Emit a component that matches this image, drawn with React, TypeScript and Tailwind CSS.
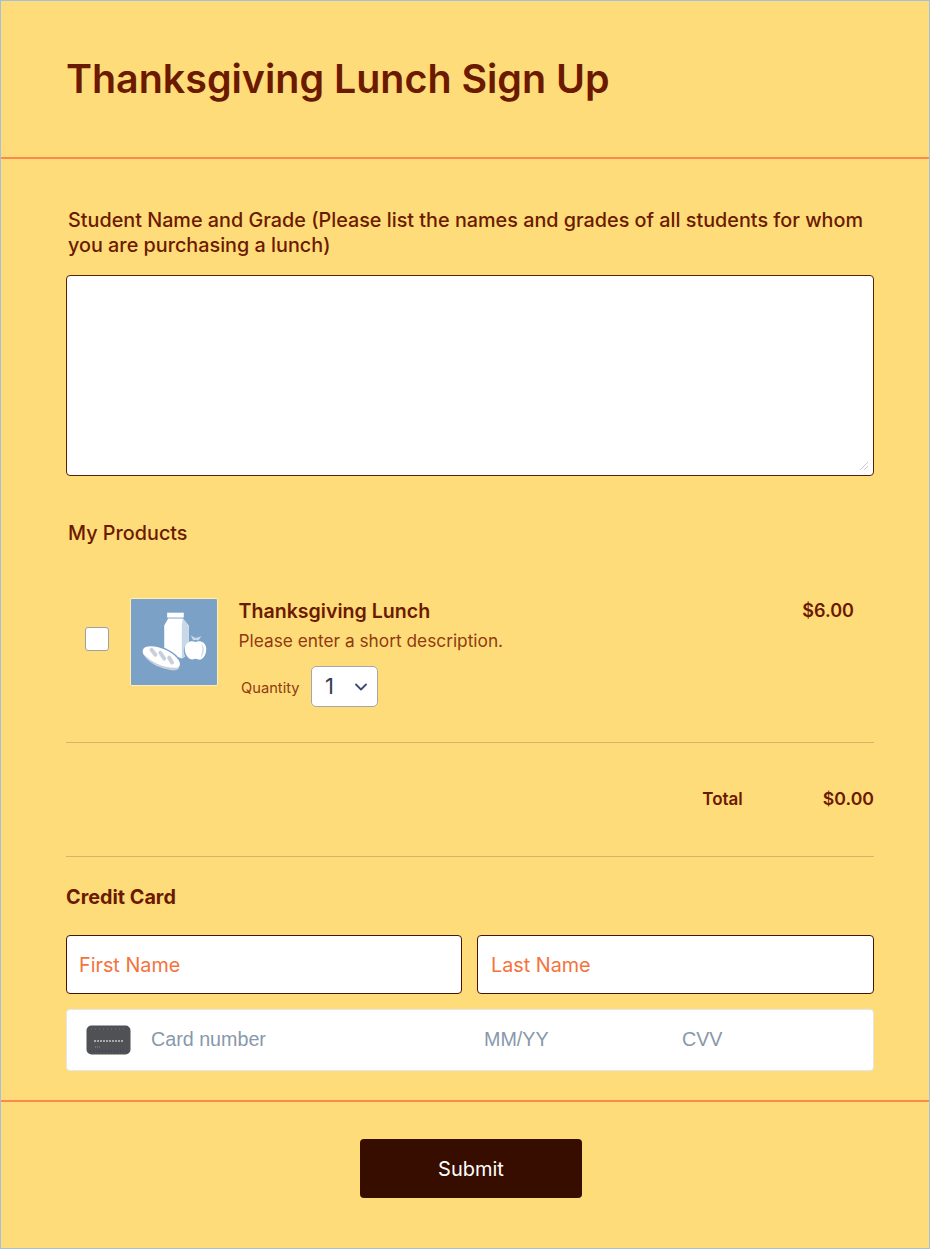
import React from 'react';
import { ChevronDown } from 'lucide-react';

// Milk carton, bread and apple drawing for the product thumbnail
const LunchIcon: React.FC<{ className?: string }> = ({ className }) => (
  <svg className={className} viewBox="0 0 88 88" xmlns="http://www.w3.org/2000/svg">
    <path d="M37 14H54V19H37Z" fill="#fff" />
    <path d="M38 20H53L59 27V56L52 61L34 54V27Z" fill="#fff" />
    <path d="M53 20L59 27V56L52 61V27Z" fill="#c9d8e8" />
    <path d="M64 43L61 37L66 40L72 38L68 44Z" fill="#c9d8e8" />
    <ellipse cx="66" cy="53" rx="12" ry="11" fill="#7ca1c7" />
    <path d="M66 44C70 42 77 44 77 51C77 58 73 63 69 62C67 61 65 61 63 62C59 62 55 57 55 51C55 44 62 42 66 44Z" fill="#fff" />
    <path d="M72 46C76 49 75 57 71 60C73 55 74 51 72 46Z" fill="#c9d8e8" />
    <ellipse cx="31" cy="60" rx="22" ry="10.5" transform="rotate(24 31 60)" fill="#7ca1c7" />
    <ellipse cx="31" cy="60" rx="20.5" ry="9" transform="rotate(24 31 60)" fill="#fff" />
    <path d="M21 52L25 57M30 55L34 61M39 60L42 65" stroke="#c9d0da" strokeWidth="4" strokeLinecap="round" />
    <path d="M13 56C20 65 36 72 50 70C48 73 43 74 37 72C28 70 17 65 13 56Z" fill="#c9d0da" />
  </svg>
);

const CardIcon: React.FC = () => (
  <svg className="w-[45px] h-[30px]" viewBox="0 0 45 30" xmlns="http://www.w3.org/2000/svg">
    <rect x="0.5" y="0.5" width="44" height="29" rx="5" fill="#505154" />
    <path d="M5 4H38" stroke="#77777a" strokeWidth="1" strokeDasharray="1 3" />
    <path d="M8 16H37" stroke="#a9a9ad" strokeWidth="2" strokeDasharray="2 1" />
    <path d="M9 22H15" stroke="#8f8f94" strokeWidth="1" strokeDasharray="1 1" />
    <path d="M4 26H41" stroke="#3a2a70" strokeWidth="1" strokeDasharray="1 2" />
  </svg>
);

const App: React.FC = () => {
  return (
    <div className="w-[930px] h-[1249px] bg-[#ffdc7a] border border-[#a3c0dc] font-['Inter',sans-serif] text-[#6b1a00] overflow-hidden">
      <header className="h-[158px] border-b-2 border-[#fb8a4c] pl-[65px] pt-[53px]">
        <h1 className="text-[39.4px] leading-[50px] font-semibold">Thanksgiving Lunch Sign Up</h1>
      </header>

      <main className="pl-[65px] pr-[55px] h-[943px] border-b-2 border-[#fb8a4c]">
        <label className="block pl-[2px] pt-[49px] text-[19.8px] leading-[25px] font-[450]">
          Student Name and Grade (Please list the names and grades of all students for whom you are purchasing a lunch)
        </label>
        <div className="relative mt-[17px]">
          <textarea className="block w-full h-[201px] bg-white border border-[#5a2000] rounded-[4px] resize-none" />
          <svg className="absolute right-[5px] bottom-[5px] w-[10px] h-[10px]" viewBox="0 0 10 10">
            <path d="M1 9L9 1M5 9L9 5" stroke="#c5cbdc" strokeWidth="1" />
          </svg>
        </div>

        <h2 className="pl-[2px] mt-[45px] text-[19.8px] leading-[25px] font-[450]">My Products</h2>

        <div className="flex items-start h-[197px] border-b border-[#d9b26a] pt-[52px]">
          <div className="w-[24px] h-[24px] ml-[19px] mt-[29px] bg-white border border-[#a0a0a8] rounded-[3px]" />
          <div className="w-[88px] h-[88px] ml-[21px] bg-[#7ca1c7] border border-[#fdeebd] rounded-[2px] shrink-0">
            <LunchIcon className="w-full h-full" />
          </div>
          <div className="ml-[20.5px] flex-1 pt-[1px]">
            <div className="flex justify-between pr-[20px]">
              <span className="text-[19.6px] leading-[24px] font-semibold">Thanksgiving Lunch</span>
              <span className="text-[18px] leading-[24px] font-semibold">$6.00</span>
            </div>
            <p className="mt-[8px] text-[17.3px] leading-[20px] text-[#8f3a0f]">Please enter a short description.</p>
            <div className="flex items-center mt-[15px] pl-[2.5px]">
              <span className="pt-[4px] text-[14.7px] text-[#8f3a0f]">Quantity</span>
              <div className="flex items-center justify-between w-[67px] h-[41px] ml-[11.5px] pl-[13px] pr-[6px] bg-white border border-[#a8a4ac] rounded-[5px] text-[22px] text-[#333b52]">
                1
                <ChevronDown className="w-[20px] h-[20px] text-[#3c4a7a]" strokeWidth={2.2} />
              </div>
            </div>
          </div>
        </div>

        <div className="flex justify-end items-center h-[114px] border-b border-[#d9b26a] font-semibold">
          <span className="text-[17px]">Total</span>
          <span className="ml-[80px] text-[17.7px]">$0.00</span>
        </div>

        <h3 className="mt-[28px] text-[19.8px] leading-[24px] font-bold">Credit Card</h3>

        <div className="grid grid-cols-[396px_1fr] gap-[15px] mt-[26px]">
          <input
            placeholder="First Name"
            className="h-[59px] px-[12px] bg-white border border-[#4a1500] rounded-[4px] text-[19.8px] placeholder:text-[#f4733c]"
          />
          <input
            placeholder="Last Name"
            className="h-[59px] px-[13px] bg-white border border-[#4a1500] rounded-[4px] text-[19.8px] placeholder:text-[#f4733c]"
          />
        </div>

        <div className="flex items-center h-[62px] mt-[15px] pl-[19px] bg-white border border-[#e3e6ee] rounded-[4px] font-['Liberation_Sans',sans-serif] text-[19.7px] text-[#8898aa]">
          <CardIcon />
          <span className="ml-[20px] w-[333px]">Card number</span>
          <span className="w-[198px]">MM/YY</span>
          <span>CVV</span>
        </div>
      </main>

      <footer className="flex justify-center pt-[37px] pl-[12px]">
        <button className="w-[222px] h-[59px] bg-[#370d00] rounded-[4px] text-white text-[20px] font-[375]">Submit</button>
      </footer>
    </div>
  );
};

export default App;
